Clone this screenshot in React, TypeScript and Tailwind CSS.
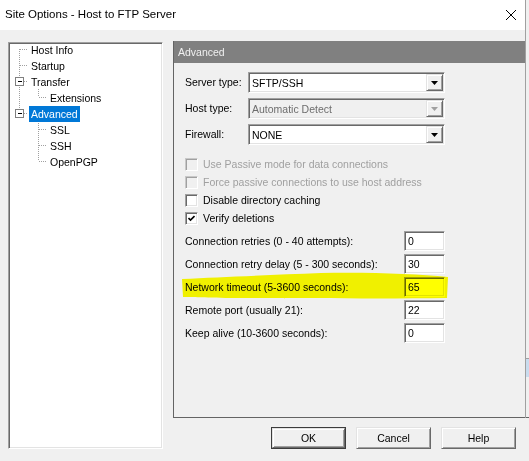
import React from "react";

const tree = [
  { label: "Host Info", lvl: 0 },
  { label: "Startup", lvl: 0 },
  { label: "Transfer", lvl: 0 },
  { label: "Extensions", lvl: 1 },
  { label: "Advanced", lvl: 0, selected: true },
  { label: "SSL", lvl: 1 },
  { label: "SSH", lvl: 1 },
  { label: "OpenPGP", lvl: 1 },
];

const sunken =
  "border border-t-[#a0a0a0] border-l-[#a0a0a0] border-b-white border-r-white shadow-[inset_1px_1px_0_#696969,inset_-1px_-1px_0_#e3e3e3]";
const raised =
  "border border-t-[#e3e3e3] border-l-[#e3e3e3] border-b-[#696969] border-r-[#696969] shadow-[inset_1px_1px_0_#fff,inset_-1px_-1px_0_#a0a0a0] bg-[#f0f0f0]";

function Arrow({ disabled }: { disabled?: boolean }) {
  return (
    <svg width="7" height="4" viewBox="0 0 7 4">
      <polygon points="0,0 7,0 3.5,4" fill={disabled ? "#a0a0a0" : "#000"} />
    </svg>
  );
}

function Combo({ value, disabled }: { value: string; disabled?: boolean }) {
  return (
    <div
      className={`${sunken} w-[197px] h-[21px] flex items-stretch ${
        disabled ? "bg-[#f0f0f0] text-[#6d6d6d]" : "bg-white"
      }`}
    >
      <div className="flex-1 flex items-center pl-[3px] pt-px">{value}</div>
      <div className={`${raised} w-[17px] m-px flex items-center justify-center`}>
        <Arrow disabled={disabled} />
      </div>
    </div>
  );
}

function Check({ label, checked, disabled }: { label: string; checked?: boolean; disabled?: boolean }) {
  return (
    <div className="h-[18px] flex items-center gap-[5px]">
      <div
        className={`${sunken} w-[13px] h-[13px] flex items-center justify-center ${
          disabled ? "bg-[#f0f0f0] border-t-[#c8c8c8] border-l-[#c8c8c8] shadow-[inset_1px_1px_0_#a0a0a0]" : "bg-white"
        }`}
      >
        {checked && (
          <svg width="7" height="7" viewBox="0 0 7 7">
            <path d="M0.5 3 L2.5 5 L6.5 1" stroke="#000" strokeWidth="1.6" fill="none" />
          </svg>
        )}
      </div>
      <span className={disabled ? "text-[#a0a0a0]" : ""}>{label}</span>
    </div>
  );
}

function NumField({ label, value, marked }: { label: string; value: string; marked?: boolean }) {
  return (
    <div className="relative h-[20px] flex items-center">
      <span className="flex-1">{label}</span>
      <div className={`${sunken} bg-white w-[41px] h-[20px] flex items-center pl-[3px] mr-[84px]`}>{value}</div>
      {marked && (
        <svg
          className="absolute -left-[4px] -top-[5px] mix-blend-multiply pointer-events-none"
          width="268"
          height="29"
          viewBox="0 0 268 29"
        >
          <path
            d="M1 7 C40 5 90 3 140 1 C190 0 235 2 267 5 L266 26 C200 27 120 26 60 26 C30 26 12 25 2 25 Z"
            fill="#ffff00"
          />
        </svg>
      )}
    </div>
  );
}

function Button({ label, def }: { label: string; def?: boolean }) {
  return (
    <div className={`w-[75px] h-[22px] ${def ? "border border-[#3c3c3c]" : ""}`}>
      <div className={`${raised} w-full h-full flex items-center justify-center`}>{label}</div>
    </div>
  );
}

export default function App() {
  return (
    <div className="relative w-[529px] h-[461px] overflow-hidden bg-[#f0f0f0] text-black font-['Liberation_Sans',Arial,sans-serif] text-[10.5px] leading-none">
      {/* title bar */}
      <div className="h-[30px] bg-white flex items-center justify-between pl-[5px] pr-[13px]">
        <span className="text-[11.5px]">Site Options - Host to FTP Server</span>
        <svg width="10" height="10" viewBox="0 0 10 10">
          <path d="M0 0 L10 10 M10 0 L0 10" stroke="#000" strokeWidth="1" />
        </svg>
      </div>

      <div className="flex">
        {/* tree */}
        <div className={`${sunken} bg-white ml-[8px] mt-[12px] w-[155px] h-[407px]`}>
          <div className="relative pl-px -mt-px">
            <svg className="absolute left-0 top-0" width="150" height="130" viewBox="0 0 150 130" shapeRendering="crispEdges">
              <g stroke="#a0a0a0" strokeDasharray="1 1" fill="none">
                <path d="M10.5 7 V71" />
                <path d="M11 7.5 H19 M11 23.5 H19 M15 39.5 H19 M15 71.5 H19" />
                <path d="M29.5 47 V55 M29.5 79 V119" />
                <path d="M30 55.5 H38 M30 87.5 H38 M30 103.5 H38 M30 119.5 H38" />
              </g>
              {[39, 71].map((cy) => (
                <g key={cy}>
                  <rect x="6.5" y={cy - 3.5} width="8" height="8" fill="#fff" stroke="#808080" />
                  <path d={`M8.5 ${cy + 0.5} H13`} stroke="#000" />
                </g>
              ))}
            </svg>
            {tree.map((t) => (
              <div key={t.label} className={`relative h-[16px] flex items-center ${t.lvl ? "pl-[38px]" : "pl-[19px]"}`}>
                <span
                  className={`px-[2px] h-[16px] flex items-center ${t.selected ? "bg-[#0078d7] text-white" : ""}`}
                >
                  {t.label}
                </span>
              </div>
            ))}
          </div>
        </div>

        {/* right column */}
        <div className="ml-[10px] mt-[11px] flex-1 flex flex-col">
          <div className="h-[377px] border-l border-b border-[#646464] flex flex-col">
            <div className="h-[22px] bg-[#808080] text-[#f0f0f0] flex items-center pl-[4px]">Advanced</div>
            <div className="pl-[11px] pt-[9px] flex flex-col">
              <div className="flex flex-col gap-[5px]">
                <div className="flex items-center">
                  <span className="w-[63px]">Server type:</span>
                  <Combo value="SFTP/SSH" />
                </div>
                <div className="flex items-center">
                  <span className="w-[63px]">Host type:</span>
                  <Combo value="Automatic Detect" disabled />
                </div>
                <div className="flex items-center">
                  <span className="w-[63px]">Firewall:</span>
                  <Combo value="NONE" />
                </div>
              </div>

              <div className="mt-[10px] flex flex-col">
                <Check label="Use Passive mode for data connections" disabled />
                <Check label="Force passive connections to use host address" disabled />
                <Check label="Disable directory caching" />
                <Check label="Verify deletions" checked />
              </div>

              <div className="mt-[4px] flex flex-col gap-[3px]">
                <NumField label="Connection retries (0 - 40 attempts):" value="0" />
                <NumField label="Connection retry delay (5 - 300 seconds):" value="30" />
                <NumField label="Network timeout (5-3600 seconds):" value="65" marked />
                <NumField label="Remote port (usually 21):" value="22" />
                <NumField label="Keep alive (10-3600 seconds):" value="0" />
              </div>
            </div>
          </div>

          <div className="mt-[9px] flex justify-end gap-[10px] pr-[13px]">
            <Button label="OK" def />
            <Button label="Cancel" />
            <Button label="Help" />
          </div>
        </div>
      </div>

      {/* window edge on the right */}
      <div className="absolute left-[525px] top-0 w-px h-[418px] bg-[#a0a0a0]" />
      <div className="absolute left-[526px] top-0 w-[3px] h-[417px] bg-[#f0f0f0]" />
      <div className="absolute left-[526px] top-[358px] w-[3px] h-[19px] bg-[#c9dcee] border-t border-[#a0a0a0]" />
    </div>
  );
}
